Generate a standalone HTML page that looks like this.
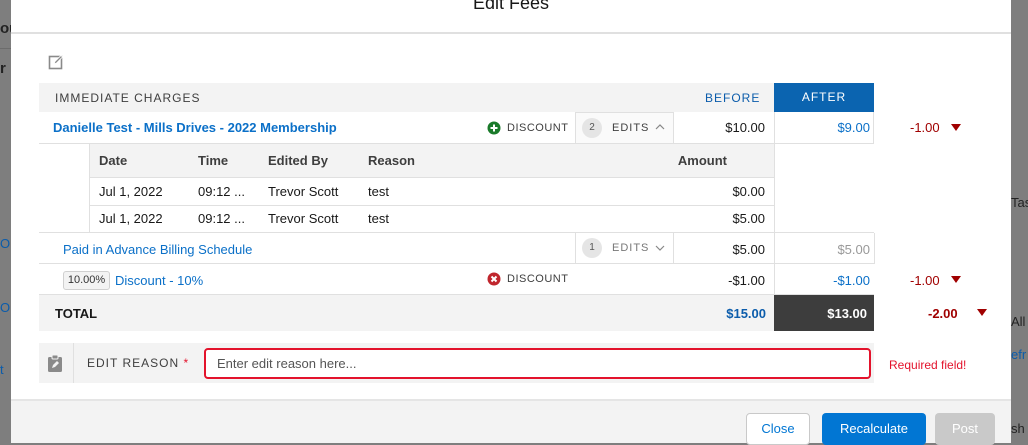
<!DOCTYPE html>
<html><head><meta charset="utf-8"><style>
*{box-sizing:border-box;margin:0;padding:0}
body{width:1028px;height:443px;overflow:hidden;background:#7e7e7e;font-family:"Liberation Sans",sans-serif;font-size:13px;color:#181818;position:relative}
.a{position:absolute;white-space:nowrap}
.blue{color:#0b70c8}
.red{color:#a00000}
.line{position:absolute;background:#e0e0e0}
.caps{letter-spacing:1px;font-size:12px;color:#3e3e3e}
.r{text-align:right}
.bt{font-weight:bold}
</style></head><body>
<div class="a" style="left:0;top:48px;width:11px;height:1px;background:#6c6c6c"></div>
<div class="a" style="left:0;top:20px;font-weight:bold;font-size:15px;color:#222">ou</div>
<div class="a" style="left:0;top:60px;font-weight:bold;font-size:15px;color:#222">r</div>
<div class="a" style="left:0;top:236px;font-size:13px;color:#0b5cab">Ori</div>
<div class="a" style="left:0;top:300px;font-size:13px;color:#0b5cab">Ori</div>
<div class="a" style="left:0;top:362px;font-size:13px;color:#0b5cab">t</div>
<div class="a" style="left:1011px;top:195px;font-size:13px;color:#222">Tas</div>
<div class="a" style="left:1011px;top:314px;font-size:13px;color:#222">All</div>
<div class="a" style="left:1011px;top:347px;font-size:13px;color:#0b5cab">efr</div>
<div class="a" style="left:1011px;top:421px;font-size:13px;color:#222">sh</div>
<div class="a" style="left:11px;top:0;width:1000px;height:443px;background:#fff"></div>
<div class="a" style="left:11px;top:-7px;width:1000px;text-align:center;font-size:18px;color:#181818">Edit Fees</div>
<div class="line" style="left:11px;top:32px;width:1000px;height:2px"></div>
<div class="a" style="left:11px;top:399px;width:1000px;height:44px;background:#f3f3f3;border-top:2px solid #e5e5e5"></div>
<div class="a" style="left:746px;top:413px;width:64px;height:32px;background:#fff;border:1px solid #c9c9c9;border-radius:4px;color:#0176d3;text-align:center;line-height:30px">Close</div>
<div class="a" style="left:822px;top:413px;width:104px;height:32px;background:#0176d3;border-radius:4px;color:#fff;text-align:center;line-height:32px">Recalculate</div>
<div class="a" style="left:935px;top:413px;width:60px;height:32px;background:#c9c9c9;border-radius:4px;color:#fff;text-align:center;line-height:32px">Post</div>
<svg class="a" style="left:48px;top:54px" width="16" height="16" viewBox="0 0 16 16"><rect x="1.5" y="2.5" width="12" height="12" fill="none" stroke="#8a8a8a" stroke-width="1.6"/><path d="M6 10 L7 7.5 L13 1.5 L14.5 3 L8.5 9 Z" fill="#8a8a8a" stroke="#fff" stroke-width="0.8"/></svg>
<div class="a" style="left:39px;top:83px;width:735px;height:29px;background:#f3f3f3"></div>
<div class="a" style="left:774px;top:83px;width:100px;height:29px;background:#0b64b0;color:#fff;text-align:center;line-height:29px;letter-spacing:1px;font-size:12px">AFTER</div>
<div class="a caps" style="left:55px;top:91px">IMMEDIATE CHARGES</div>
<div class="a" style="left:705px;top:91px;letter-spacing:1px;font-size:12px;color:#0b5cab">BEFORE</div>
<div class="a blue bt" style="left:53px;top:120px">Danielle Test - Mills Drives - 2022 Membership</div>
<svg class="a" style="left:487px;top:121px" width="14" height="14"><circle cx="7" cy="7" r="6.5" fill="#1a7a2a"/><path d="M7 3.5v7M3.5 7h7" stroke="#fff" stroke-width="2"/></svg>
<div class="a" style="left:507px;top:122px;font-size:11px;letter-spacing:.5px;color:#3e3e3e">DISCOUNT</div>
<div class="a" style="left:575px;top:112px;width:99px;height:32px;background:#fafafa;border:1px solid #e0e0e0;border-bottom:none"></div>
<div class="a" style="left:582px;top:118px;width:20px;height:20px;border-radius:50%;background:#e5e5e5;font-size:10px;color:#555;text-align:center;line-height:20px">2</div>
<div class="a caps" style="left:612px;top:122px;font-size:11px">EDITS</div>
<svg class="a" style="left:655px;top:124px" width="10" height="6"><path d="M1 5l4-4 4 4" fill="none" stroke="#888" stroke-width="1.2"/></svg>
<div class="a r" style="left:680px;top:120px;width:85px">$10.00</div>
<div class="a" style="left:774px;top:112px;width:100px;height:32px;border:1px solid #e0e0e0;border-top:none"></div>
<div class="a r blue" style="left:780px;top:120px;width:90px">$9.00</div>
<div class="a red" style="left:910px;top:120px">-1.00</div>
<svg class="a" style="left:951px;top:124px" width="10" height="7"><path d="M0 0h10L5 7z" fill="#a00000"/></svg>
<div class="line" style="left:39px;top:143px;width:735px;height:1px"></div>
<div class="a" style="left:89px;top:144px;width:685px;height:33px;background:#f3f3f3"></div>
<div class="line" style="left:89px;top:144px;width:1px;height:89px"></div>
<div class="line" style="left:774px;top:144px;width:1px;height:89px"></div>
<div class="line" style="left:89px;top:177px;width:685px;height:1px"></div>
<div class="line" style="left:89px;top:205px;width:685px;height:1px"></div>
<div class="line" style="left:39px;top:232px;width:835px;height:1px"></div>
<div class="a bt" style="left:99px;top:153px;color:#3e3e3e">Date</div>
<div class="a bt" style="left:198px;top:153px;color:#3e3e3e">Time</div>
<div class="a bt" style="left:268px;top:153px;color:#3e3e3e">Edited By</div>
<div class="a bt" style="left:368px;top:153px;color:#3e3e3e">Reason</div>
<div class="a bt r" style="left:640px;top:153px;width:87px;color:#3e3e3e">Amount</div>
<div class="a" style="left:99px;top:184px">Jul 1, 2022</div><div class="a" style="left:198px;top:184px">09:12 ...</div><div class="a" style="left:268px;top:184px">Trevor Scott</div><div class="a" style="left:368px;top:184px">test</div><div class="a r" style="left:680px;top:184px;width:85px">$0.00</div>
<div class="a" style="left:99px;top:211px">Jul 1, 2022</div><div class="a" style="left:198px;top:211px">09:12 ...</div><div class="a" style="left:268px;top:211px">Trevor Scott</div><div class="a" style="left:368px;top:211px">test</div><div class="a r" style="left:680px;top:211px;width:85px">$5.00</div>
<div class="a blue" style="left:63px;top:242px">Paid in Advance Billing Schedule</div>
<div class="a" style="left:575px;top:233px;width:99px;height:31px;border-left:1px solid #e0e0e0;border-right:1px solid #e0e0e0"></div>
<div class="a" style="left:582px;top:238px;width:20px;height:20px;border-radius:50%;background:#e5e5e5;font-size:10px;color:#555;text-align:center;line-height:20px">1</div>
<div class="a caps" style="left:612px;top:242px;font-size:11px;color:#777">EDITS</div>
<svg class="a" style="left:655px;top:245px" width="10" height="6"><path d="M1 1l4 4 4-4" fill="none" stroke="#888" stroke-width="1.2"/></svg>
<div class="a r" style="left:680px;top:242px;width:85px">$5.00</div>
<div class="line" style="left:774px;top:233px;width:1px;height:62px"></div>
<div class="line" style="left:874px;top:233px;width:1px;height:31px"></div>
<div class="a r" style="left:780px;top:242px;width:90px;color:#999">$5.00</div>
<div class="line" style="left:39px;top:263px;width:835px;height:1px"></div>
<div class="a" style="left:63px;top:271px;width:47px;height:19px;border:1px solid #d0d0d0;background:#f3f3f3;border-radius:3px;font-size:11px;text-align:center;line-height:17px;color:#333">10.00%</div>
<div class="a blue" style="left:115px;top:273px">Discount - 10%</div>
<svg class="a" style="left:487px;top:272px" width="14" height="14"><circle cx="7" cy="7" r="6.5" fill="#c0262d"/><path d="M4.5 4.5l5 5M9.5 4.5l-5 5" stroke="#fff" stroke-width="2"/></svg>
<div class="a" style="left:507px;top:273px;font-size:11px;letter-spacing:.5px;color:#3e3e3e">DISCOUNT</div>
<div class="a r" style="left:680px;top:273px;width:85px">-$1.00</div>
<div class="a r blue" style="left:780px;top:273px;width:90px">-$1.00</div>
<div class="a red" style="left:910px;top:273px">-1.00</div>
<svg class="a" style="left:951px;top:276px" width="10" height="7"><path d="M0 0h10L5 7z" fill="#a00000"/></svg>
<div class="line" style="left:39px;top:294px;width:835px;height:1px"></div>
<div class="a" style="left:39px;top:295px;width:735px;height:36px;background:#f3f3f3"></div>
<div class="a" style="left:774px;top:295px;width:100px;height:36px;background:#3d3d3d"></div>
<div class="a bt" style="left:55px;top:306px">TOTAL</div>
<div class="a bt r" style="left:680px;top:306px;width:86px;color:#0b5cab">$15.00</div>
<div class="a bt r" style="left:780px;top:306px;width:87px;color:#fff">$13.00</div>
<div class="a bt red" style="left:928px;top:306px">-2.00</div>
<svg class="a" style="left:977px;top:309px" width="10" height="7"><path d="M0 0h10L5 7z" fill="#a00000"/></svg>
<div class="a" style="left:39px;top:343px;width:835px;height:40px;background:#f3f3f3"></div>
<div class="line" style="left:73px;top:343px;width:1px;height:40px"></div>
<svg class="a" style="left:47px;top:354px" width="16" height="18" viewBox="0 0 16 18"><rect x="1" y="3" width="14" height="15" rx="1.5" fill="#8a8a8a"/><rect x="5" y="1" width="6" height="4" rx="1" fill="#8a8a8a" stroke="#f3f3f3" stroke-width="1"/><path d="M5 14l1-3 4-4 2 2-4 4z" fill="#f3f3f3"/></svg>
<div class="a caps" style="left:87px;top:356px">EDIT REASON <span style="color:#e3132c">*</span></div>
<div class="a" style="left:204px;top:348px;width:667px;height:31px;background:#fff;border:2px solid #e3132c;border-radius:4px;padding-left:11px;line-height:27px;color:#555;font-size:13px">Enter edit reason here...</div>
<div class="a" style="left:889px;top:358px;color:#e3132c;font-size:12px">Required field!</div>
</body></html>
